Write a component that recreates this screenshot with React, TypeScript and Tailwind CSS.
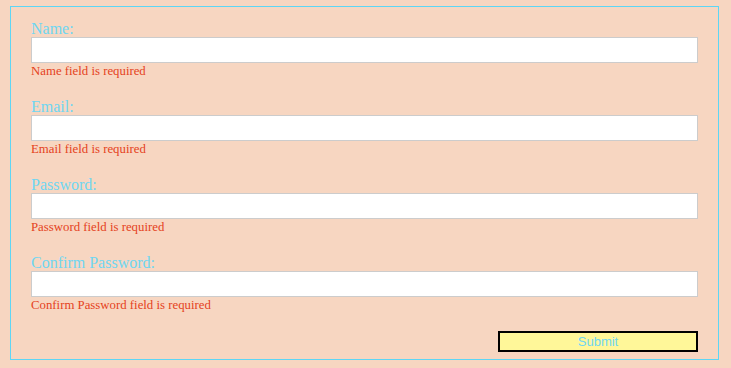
const fields = [
  { label: 'Name:', type: 'text', error: 'Name field is required' },
  { label: 'Email:', type: 'email', error: 'Email field is required' },
  { label: 'Password:', type: 'password', error: 'Password field is required' },
  { label: 'Confirm Password:', type: 'password', error: 'Confirm Password field is required' },
]

export default function App() {
  return (
    <div className="min-h-screen w-full overflow-hidden bg-[#f7d6c1] pt-[6px] pl-[10px]">
      <form
        className="w-[709px] border border-[#5ed6f5] px-[20px] pt-[13px] pb-[7px] font-['Liberation_Serif',serif]"
        onSubmit={(e) => e.preventDefault()}
      >
        <div className="flex flex-col gap-[19px]">
          {fields.map((field) => (
            <div key={field.label} className="flex flex-col">
              <label className="text-[16px] leading-[17px] text-[#6fd6f2]">
                {field.label}
              </label>
              <input
                type={field.type}
                className="h-[26px] w-full border border-[#cccccc] bg-white px-1 outline-none"
              />
              <span className="text-[12.8px] leading-[16px] text-[#e5421c]">
                {field.error}
              </span>
            </div>
          ))}
        </div>

        <div className="mt-[18px] flex justify-end">
          <button
            type="submit"
            className="h-[21px] w-[200px] border-2 border-black bg-[#fff799] font-['Liberation_Sans',sans-serif] text-[13px] leading-none text-[#6fd6f2]"
          >
            Submit
          </button>
        </div>
      </form>
    </div>
  )
}
